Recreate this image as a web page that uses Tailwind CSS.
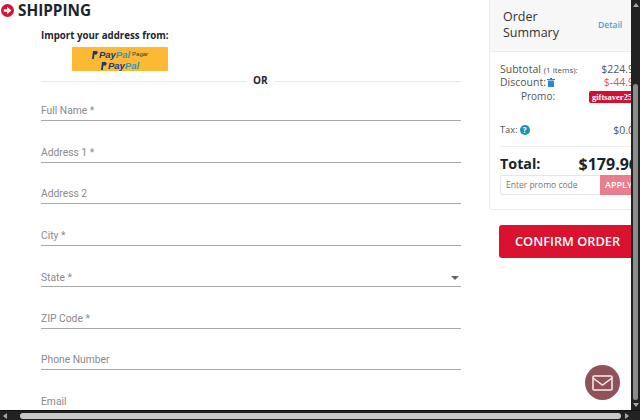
<!DOCTYPE html>
<html lang="en">
<head>
<meta charset="utf-8"/>
<title>Checkout</title>
<script src="https://cdn.jsdelivr.net/npm/@tailwindcss/browser@4"></script>
</head>
<body class="bg-white overflow-hidden font-['Open_Sans',sans-serif]">
<div class="relative flex flex-col w-[640px] h-[420px] overflow-hidden">
  <div class="flex flex-1 min-h-0">
    <div class="relative flex w-[631px] overflow-hidden">
      <!-- left column -->
      <div class="w-[489px] shrink-0">
        <div class="flex items-center gap-[4px] pl-px mt-px h-[18px]">
          <svg class="w-[13px] h-[13px]" viewBox="0 0 14 14"><circle cx="7" cy="7" r="7" fill="#d7142f"/><path d="M3 5.600h3.600V3l4.600 4-4.600 4V8.400H3z" fill="#fff"/></svg>
          <h1 class="text-[15.300px] leading-[18px] font-bold text-[#1b2430]">SHIPPING</h1>
        </div>
        <div class="pl-[41px] pr-[28px]">
          <p class="mt-[9px] text-[9.700px] leading-[15px] font-bold text-[#1f2530]">Import your address from:</p>
          <div class="ml-[31px] mt-[4px] pt-[2px] w-[96px] h-[24px] bg-[#fdb933] rounded-[1px] flex flex-col items-center font-['Liberation_Sans',sans-serif] italic font-bold text-[9.500px] leading-[11px]">
            <div class="flex items-center gap-[1px]">
              <svg class="w-[6px] h-[8px]" viewBox="0 0 6 8"><path d="M1 0h3c2 0 2.200 2.400.6 3.400H2.400L1.800 8H0z" fill="#0f3a80"/></svg>
              <span class="text-[#0f3a80]">Pay<span class="text-[#2a9bc4]">Pal</span></span>
              <span class="ml-px text-[6px] not-italic font-normal text-[#333]">Pagar</span>
            </div>
            <div class="flex items-center gap-[1px]">
              <svg class="w-[6px] h-[8px]" viewBox="0 0 6 8"><path d="M1 0h3c2 0 2.200 2.400.6 3.400H2.400L1.800 8H0z" fill="#0f3a80"/></svg>
              <span class="text-[#0f3a80]">Pay<span class="text-[#2a9bc4]">Pal</span></span>
            </div>
          </div>
          <div class="relative mt-[10px] h-px bg-[#e9e9e9]">
            <span class="absolute left-[206px] top-[-8px] px-[6px] bg-white text-[10px] leading-[14px] font-bold text-[#1f2530]">OR</span>
          </div>
          <div class="font-['Roboto',sans-serif] text-[10.300px] text-[#8a8a8a] flex flex-col gap-[19.500px] mt-[17px]">
            <div class="h-[22px] pt-[4px] leading-[16px] border-b border-[#a8a8a8]">Full Name *</div>
            <div class="h-[22px] pt-[4px] leading-[16px] border-b border-[#a8a8a8]">Address 1 *</div>
            <div class="h-[22px] pt-[4px] leading-[16px] border-b border-[#a8a8a8]">Address 2</div>
            <div class="h-[22px] pt-[4px] leading-[16px] border-b border-[#a8a8a8]">City *</div>
            <div class="flex justify-between items-center h-[22px] pt-[4px] leading-[16px] border-b border-[#a8a8a8]">
              <span>State *</span>
              <span class="mr-[2px] w-0 h-0 border-x-[4px] border-x-transparent border-t-[4px] border-t-[#666]"></span>
            </div>
            <div class="h-[22px] pt-[4px] leading-[16px] border-b border-[#a8a8a8]">ZIP Code *</div>
            <div class="h-[22px] pt-[4px] leading-[16px] border-b border-[#a8a8a8]">Phone Number</div>
            <div class="h-[22px] pt-[4px] leading-[16px]">Email</div>
          </div>
        </div>
      </div>
      <!-- order summary -->
      <div class="w-[156px] shrink-0">
        <div class="border border-t-0 border-[#ececec] rounded-b-[3px] h-[210px]">
          <div class="flex justify-between items-center h-[52px] pl-[13px] pr-[7px] bg-[#f7f7f7] border-b border-[#ececec]">
            <h2 class="-mt-[2px] text-[12.500px] leading-[16px] text-[#333] w-[70px]">Order Summary</h2>
            <span class="mr-[7px] text-[8.500px] font-semibold text-[#4a9fd6] w-[32px]">Detail</span>
          </div>
          <div class="pl-[10px] pr-[4px] text-[10.500px] text-[#555]">
            <div class="flex justify-between mt-[11px] leading-[13px]"><span>Subtotal <span class="text-[8px]">(1 items):</span></span><span>$224.95</span></div>
            <div class="flex justify-between leading-[13px]">
              <span class="flex items-center gap-[1px]">Discount:
                <svg class="w-[8px] h-[9px]" viewBox="0 0 8 9"><path d="M1 2.500h6V9H1zM0 1h8v1H0zM3 0h2v1H3z" fill="#2f86d1"/></svg>
              </span>
              <span class="text-[#d9536b]">$-44.99</span>
            </div>
            <div class="flex justify-between leading-[15px]">
              <span class="pl-[21px] text-[10px]">Promo:</span>
              <span class="h-[12px] pl-[3px] mt-[2px] rounded-[2px] bg-[#cf1230] text-white text-[8.500px] leading-[12px] font-bold font-['Liberation_Serif',serif] w-[51px] overflow-hidden">giftsaver25</span>
            </div>
            <div class="flex justify-between items-center mt-[19px] h-[14px] leading-[14px]">
              <span class="flex items-center gap-[2px] text-[9.300px]">Tax:
                <span class="flex items-center justify-center w-[10px] h-[10px] rounded-full bg-[#1793b8] text-white text-[8px] leading-none font-bold">?</span>
              </span>
              <span>$0.00</span>
            </div>
            <div class="h-px bg-[#efefef] mt-[9px]"></div>
            <div class="flex justify-between items-center mt-[7px] h-[20px] font-bold text-[#1c222b]"><span class="text-[14.300px]">Total:</span><span class="mr-[2px] text-[16px]">$179.96</span></div>
            <div class="flex h-[20px] mt-px">
              <div class="w-[100px] pl-[5px] border border-[#e6e6e6] border-r-0 rounded-l-[2px] text-[8.500px] leading-[18px] text-[#777]">Enter promo code</div>
              <div class="w-[40px] pl-[5px] bg-[#ea7d8e] text-white text-[9px] leading-[20px] font-semibold">APPLY</div>
            </div>
          </div>
        </div>
        <div class="flex items-center pl-[16px] pt-px h-[33px] w-[142px] mt-[15px] ml-[10px] bg-[#d9122f] rounded-[3px] text-white text-[12.800px] font-semibold whitespace-nowrap">CONFIRM ORDER</div>
      </div>
    </div>
    <!-- vertical scrollbar -->
    <div class="relative flex flex-col justify-between items-center py-[3px] w-[9px] bg-[#222]">
      <span class="w-0 h-0 border-x-[3px] border-x-transparent border-b-[4px] border-b-[#aaa]"></span>
      <div class="absolute left-[2px] top-[84px] w-[5px] h-[316px] bg-[#8c8c8c] rounded-full"></div>
      <span class="w-0 h-0 border-x-[3px] border-x-transparent border-t-[4px] border-t-[#aaa]"></span>
    </div>
  </div>
  <!-- horizontal scrollbar -->
  <div class="flex items-center gap-[4px] h-[10px] pl-[3px] pr-[11px] border-t border-[#111] bg-[#222]">
    <span class="w-0 h-0 border-y-[3px] border-y-transparent border-r-[4px] border-r-[#aaa]"></span>
    <div class="ml-[9px] flex-1 h-[6px] rounded-full bg-[#c9c9c9]"></div>
    <span class="w-0 h-0 border-y-[3px] border-y-transparent border-l-[4px] border-l-[#aaa]"></span>
  </div>
  <!-- mail bubble -->
  <div class="absolute left-[585px] top-[365px] flex items-center justify-center w-[35px] h-[35px] rounded-full bg-[#90525a]">
    <svg class="w-[21px] h-[16px]" viewBox="0 0 21 16" fill="none" stroke="#fbeeee" stroke-width="1.500"><rect x="1" y="1" width="19" height="14" rx="1"/><path d="M1 3l9.500 7L20 3"/></svg>
  </div>
</div>
</body>
</html>
